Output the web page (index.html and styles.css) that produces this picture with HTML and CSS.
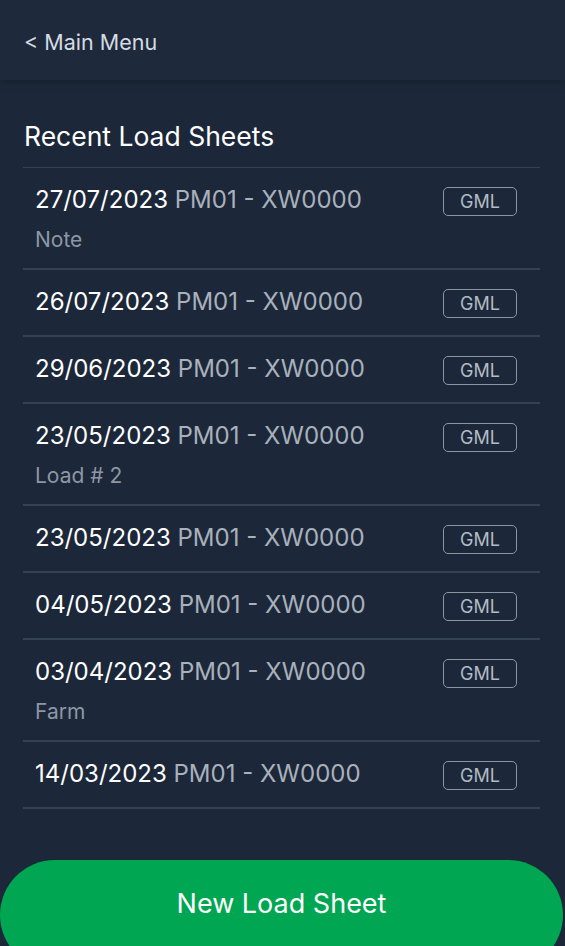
FILE: index.html
```html
<!DOCTYPE html>
<html lang="en">
<head>
    <meta charset="UTF-8">
    <meta name="viewport" content="width=device-width, initial-scale=1.0">
    <title>Load Sheets</title>
    <link rel="stylesheet" href="styles.css">
</head>
<body>
    <div id="app">
        <!-- top bar -->
        <header class="top-bar">
            <a class="back-link" href="#">&lt; Main Menu</a>
        </header>

        <main class="content">
            <h1 class="section-title">Recent Load Sheets</h1>

            <ul class="sheet-list">
                <li class="sheet-row">
                    <div class="sheet-info">
                        <div class="sheet-title"><span class="sheet-date">27/07/2023</span> PM01 - XW0000</div>
                        <div class="sheet-note">Note</div>
                    </div>
                    <span class="badge">GML</span>
                </li>
                <li class="sheet-row">
                    <div class="sheet-info">
                        <div class="sheet-title"><span class="sheet-date">26/07/2023</span> PM01 - XW0000</div>
                    </div>
                    <span class="badge">GML</span>
                </li>
                <li class="sheet-row">
                    <div class="sheet-info">
                        <div class="sheet-title"><span class="sheet-date">29/06/2023</span> PM01 - XW0000</div>
                    </div>
                    <span class="badge">GML</span>
                </li>
                <li class="sheet-row">
                    <div class="sheet-info">
                        <div class="sheet-title"><span class="sheet-date">23/05/2023</span> PM01 - XW0000</div>
                        <div class="sheet-note">Load # 2</div>
                    </div>
                    <span class="badge">GML</span>
                </li>
                <li class="sheet-row">
                    <div class="sheet-info">
                        <div class="sheet-title"><span class="sheet-date">23/05/2023</span> PM01 - XW0000</div>
                    </div>
                    <span class="badge">GML</span>
                </li>
                <li class="sheet-row">
                    <div class="sheet-info">
                        <div class="sheet-title"><span class="sheet-date">04/05/2023</span> PM01 - XW0000</div>
                    </div>
                    <span class="badge">GML</span>
                </li>
                <li class="sheet-row">
                    <div class="sheet-info">
                        <div class="sheet-title"><span class="sheet-date">03/04/2023</span> PM01 - XW0000</div>
                        <div class="sheet-note">Farm</div>
                    </div>
                    <span class="badge">GML</span>
                </li>
                <li class="sheet-row">
                    <div class="sheet-info">
                        <div class="sheet-title"><span class="sheet-date">14/03/2023</span> PM01 - XW0000</div>
                    </div>
                    <span class="badge">GML</span>
                </li>
            </ul>
        </main>

        <button class="new-button">New Load Sheet</button>
    </div>
</body>
</html>
```

FILE: styles.css
```css
body {
    margin: 0;
    padding: 0;
    background-color: #1c2839;
    font-family: Inter, "Noto Sans", sans-serif;
    overflow: hidden;
}
#app {
    width: 565px;
    min-height: 946px;
}
.top-bar {
    height: 80px;
    background-color: #1e2a3b;
    box-shadow: 0 2px 8px rgba(0, 0, 0, 0.25);
    display: flex;
    align-items: center;
    padding-left: 24px;
    position: relative;
}
.back-link {
    color: #d5dbe2;
    font-size: 21.5px;
    text-decoration: none;
    margin-top: 3px;
}
.content {
    padding: 38px 25px 0 23px;
}
.section-title {
    margin: 0 0 13px 1px;
    color: #ffffff;
    font-size: 26.5px;
    font-weight: 400;
    line-height: 36px;
}
.sheet-list {
    list-style: none;
    margin: 0;
    padding: 0;
    border-top: 1px solid #344256;
}
.sheet-row {
    display: flex;
    justify-content: space-between;
    align-items: flex-start;
    padding: 16px 23px 17px 12px;
    border-bottom: 2px solid #344256;
}
.sheet-title {
    color: #a9b1bc;
    font-size: 24px;
    line-height: 32px;
}
.sheet-date {
    color: #ffffff;
}
.sheet-note {
    color: #8d97a4;
    font-size: 21px;
    line-height: 23px;
    margin-top: 12px;
}
.badge {
    margin-top: 3px;
    width: 72px;
    height: 27px;
    border: 1.5px solid #8b95a2;
    border-radius: 5px;
    color: #b3bbc5;
    font-size: 18px;
    display: flex;
    align-items: center;
    justify-content: center;
}
.new-button {
    display: block;
    width: 563px;
    height: 110px;
    margin-top: 51px;
    border: none;
    border-radius: 55px;
    background-color: #00a651;
    color: #ffffff;
    font-family: Inter, "Noto Sans", sans-serif;
    font-size: 27px;
    padding: 0 0 24px;
    cursor: pointer;
}
```
